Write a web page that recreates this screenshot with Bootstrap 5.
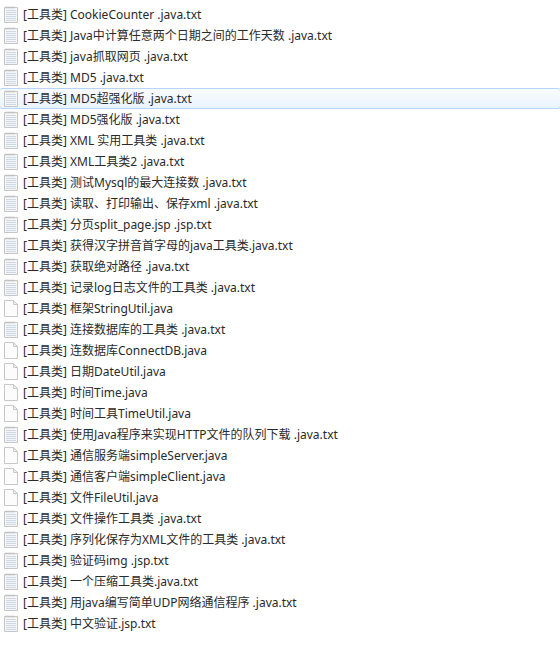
<!DOCTYPE html>
<html lang="zh"><head><meta charset="utf-8"><title>工具类</title>
<link href="https://cdn.jsdelivr.net/npm/bootstrap@5.3.0/dist/css/bootstrap.min.css" rel="stylesheet">
<style>
body{background:#fff;font-family:"Noto Sans","Noto Sans CJK SC",sans-serif;font-size:12px;color:#2a2a2a;}
.files{padding-top:4px;}
.filerow{height:21px;padding-left:4px;gap:5px;line-height:21px;white-space:nowrap;border-radius:2px;}
.filerow svg{flex:none;width:14px;height:17px;}
.filerow.hovered{background:linear-gradient(#fafcfe,#e9f3fc);box-shadow:inset 0 1px 0 #b8d6fb,inset 0 -1px 0 #b8d6fb;}
</style></head><body>
<svg width="0" height="0" class="position-absolute"><defs>
<symbol id="blank" viewBox="0 0 14 17"><path d="M.5.5H9.5L13.5 4.5V16.5H.5Z" fill="#fcfcfc" stroke="#c8c8c8"/><path d="M9.5.5V4.5H13.5Z" fill="#efefef" stroke="#c8c8c8"/></symbol>
<symbol id="lined" viewBox="0 0 14 17"><path d="M.5 1.5H13.5V16.5H.5Z" fill="#f6f6f6" stroke="#c6c6c6"/><path d="M2 0.5V2.5M4 0.5V2.5M6 0.5V2.5M8 0.5V2.5M10 0.5V2.5" stroke="#bcbcbc"/><path d="M2 4.5H12M2 6.5H12M2 8.5H12M2 10.5H12M2 12.5H12M2 14.5H12" stroke="#ccd8e6"/></symbol>
</defs></svg>
<ul class="files list-unstyled m-0" id="list"></ul>
<script>
const items=[["CookieCounter .java.txt",1],["Java中计算任意两个日期之间的工作天数 .java.txt",1],["java抓取网页 .java.txt",1],["MD5 .java.txt",1],["MD5超强化版 .java.txt",1],["MD5强化版 .java.txt",1],["XML 实用工具类 .java.txt",1],["XML工具类2 .java.txt",1],["测试Mysql的最大连接数 .java.txt",1],["读取、打印输出、保存xml .java.txt",1],["分页split_page.jsp .jsp.txt",1],["获得汉字拼音首字母的java工具类.java.txt",1],["获取绝对路径 .java.txt",1],["记录log日志文件的工具类 .java.txt",1],["框架StringUtil.java",0],["连接数据库的工具类 .java.txt",1],["连数据库ConnectDB.java",0],["日期DateUtil.java",0],["时间Time.java",0],["时间工具TimeUtil.java",0],["使用Java程序来实现HTTP文件的队列下载 .java.txt",1],["通信服务端simpleServer.java",0],["通信客户端simpleClient.java",0],["文件FileUtil.java",0],["文件操作工具类 .java.txt",1],["序列化保存为XML文件的工具类 .java.txt",1],["验证码img .jsp.txt",1],["一个压缩工具类.java.txt",1],["用java编写简单UDP网络通信程序 .java.txt",1],["中文验证.jsp.txt",1]];
document.getElementById('list').innerHTML=items.map((it,i)=>`<li class="filerow d-flex align-items-center${i==4?' hovered':''}"><svg><use href="#${it[1]?'lined':'blank'}"/></svg><span>[工具类] ${it[0]}</span></li>`).join('');
</script>
<script src="https://cdn.jsdelivr.net/npm/bootstrap@5.3.0/dist/js/bootstrap.bundle.min.js"></script>
</body></html>
